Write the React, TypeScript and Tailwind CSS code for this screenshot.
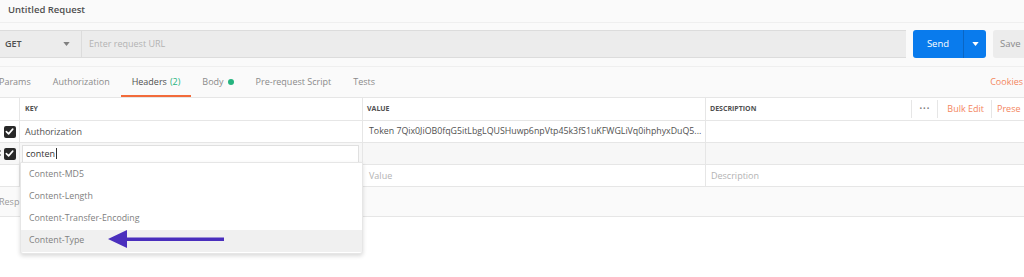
import React from "react";

const Check = () => (
  <span className="flex h-[12px] w-[12px] items-center justify-center rounded-[2px] bg-[#282828]">
    <svg width="9" height="9" viewBox="0 0 10 10">
      <path d="M1.5 5.2 L4 7.6 L8.6 2.4" stroke="#fff" strokeWidth="1.8" fill="none" strokeLinecap="round" strokeLinejoin="round" />
    </svg>
  </span>
);

const Caret = ({ color }: { color: string }) => (
  <svg width="7" height="4" viewBox="0 0 8 5">
    <path d="M0 0 L8 0 L4 5 Z" fill={color} />
  </svg>
);

const tabs = ["Params", "Authorization", "Headers", "Body", "Pre-request Script", "Tests"];

export default function App() {
  return (
    <div className="relative h-[277px] w-[1024px] overflow-hidden bg-white font-['Open_Sans',sans-serif] text-[#505050]">
      {/* title */}
      <div className="flex h-[23px] items-center border-b border-[#efefef] bg-[#fafafa] pb-[1px] pl-[8px] text-[9.5px] font-semibold">
        Untitled Request
      </div>

      {/* url bar */}
      <div className="flex h-[44px] items-center border-b border-[#efefef] bg-[#fafafa] pb-[1px]">
        <div className="flex h-[28px] w-[906px] border-y border-[#dcdcdc] bg-[#ececec]">
          <div className="flex w-[82px] items-center justify-between border-r border-[#dcdcdc] pl-[5px] pr-[11px] text-[9px] font-semibold">
            GET
            <Caret color="#808080" />
          </div>
          <div className="flex flex-1 items-center pl-[7px] text-[9px] text-[#b3b3b3]">Enter request URL</div>
        </div>
        <div className="ml-[7px] flex h-[28px] w-[73px] rounded-[3px] bg-[#097bed] text-white">
          <div className="flex w-[50px] items-center justify-center text-[9.5px]">Send</div>
          <div className="flex flex-1 items-center justify-center border-l border-[#0a66c4]">
            <Caret color="#ffffff" />
          </div>
        </div>
        <div className="ml-[7px] flex h-[28px] flex-1 items-center rounded-l-[3px] bg-[#ececec] pl-[7px] text-[9.5px] text-[#8a8a8a]">
          Save
        </div>
      </div>

      {/* tabs */}
      <div className="flex h-[30px] items-end bg-[#fafafa] text-[9px] text-[#8a8a8a]">
        <div className="flex h-full flex-1 items-stretch">
          {tabs.map((t, i) => (
            <div
              key={t}
              className={
                i === 0
                  ? "-ml-[1px] flex items-center pr-[11px]"
                  : i === 2
                  ? "flex items-center border-b-2 border-[#f26b3a] px-[11px] pt-[2px] text-[#505050]"
                  : "flex items-center px-[11px]"
              }
            >
              {t}
              {t === "Headers" && <span className="ml-[3px] text-[#26b47f]">(2)</span>}
              {t === "Body" && <span className="ml-[4px] inline-block h-[6px] w-[6px] rounded-full bg-[#26b47f]" />}
            </div>
          ))}
        </div>
        <div className="flex h-full items-center pr-[1px] text-[#f4865e]">Cookies</div>
      </div>

      {/* table */}
      <div className="border-t border-[#e6e6e6] text-[9px]">
        <div className="grid h-[23px] grid-cols-[20px_343px_343px_1fr] border-b border-[#e6e6e6] bg-white">
          <div className="border-r border-[#e6e6e6]" />
          <div className="flex items-center border-r border-[#e6e6e6] pl-[5px] text-[7px] font-bold text-[#505050]">KEY</div>
          <div className="flex items-center border-r border-[#e6e6e6] pl-[4px] text-[7px] font-bold text-[#505050]">VALUE</div>
          <div className="flex items-center justify-between pl-[4px]">
            <span className="text-[7px] font-bold text-[#505050]">DESCRIPTION</span>
            <div className="flex h-full items-center py-[2px] text-[9px]">
              <span className="flex h-full items-center border-l border-[#e6e6e6] px-[7px] text-[7px] tracking-[1px] text-[#808080]">•••</span>
              <span className="flex h-full items-center border-l border-[#e6e6e6] pl-[9px] pr-[7px] text-[#f4865e]">Bulk Edit</span>
              <span className="flex h-full w-[33px] items-center overflow-hidden whitespace-nowrap border-l border-[#e6e6e6] pl-[5px] text-[#f4865e]">Prese</span>
            </div>
          </div>
        </div>

        <div className="grid h-[22px] grid-cols-[20px_343px_343px_1fr] border-b border-[#e6e6e6] bg-white">
          <div className="flex items-center justify-center border-r border-[#e6e6e6]"><Check /></div>
          <div className="flex items-center border-r border-[#e6e6e6] pl-[5px]">Authorization</div>
          <div className="flex items-center whitespace-nowrap border-r border-[#e6e6e6] pl-[6px] text-[8.8px]">
            Token 7Qix0JiOB0fqG5itLbgLQUSHuwp6npVtp45k3fS1uKFWGLiVq0ihphyxDuQ5...
          </div>
          <div />
        </div>

        <div className="grid h-[22px] grid-cols-[20px_343px_343px_1fr] border-b border-[#e6e6e6] bg-[#f7f7f7]">
          <div className="relative flex items-center justify-center border-r border-[#e6e6e6]">
            <span className="absolute left-[-1px] top-[7px] flex flex-col gap-[2px]">
              <span className="h-[2px] w-[2px] bg-[#9a9a9a]" />
              <span className="h-[2px] w-[2px] bg-[#9a9a9a]" />
            </span>
            <Check />
          </div>
          <div className="flex items-center border-r border-[#e6e6e6] pl-[2px] pr-[3px]">
            <div className="flex h-[18px] w-full items-center border border-[#e0e0e0] bg-white pl-[3px] text-[#333]">
              conten<span className="ml-[1px] inline-block h-[11px] w-[1px] bg-[#333]" />
            </div>
          </div>
          <div className="border-r border-[#e6e6e6]" />
          <div />
        </div>

        <div className="grid h-[22px] grid-cols-[20px_343px_343px_1fr] border-b border-[#e6e6e6] bg-white text-[#b3b3b3]">
          <div className="border-r border-[#e6e6e6]" />
          <div className="border-r border-[#e6e6e6]" />
          <div className="flex items-center border-r border-[#e6e6e6] pl-[6px]">Value</div>
          <div className="flex items-center pl-[5px]">Description</div>
        </div>
      </div>

      <div className="flex h-[30px] items-center border-b border-[#e6e6e6] bg-[#fafafa] text-[9px] text-[#9a9a9a]">
        <span className="-ml-[1px]">Resp</span>
      </div>

      {/* autocomplete */}
      <div className="absolute left-[20px] top-[162px] w-[343px] rounded-b-[3px] border border-[#e6e6e6] bg-white py-[1px] text-[8.8px] text-[#808080] shadow-[0_2px_4px_rgba(0,0,0,0.15)]">
        {["Content-MD5", "Content-Length", "Content-Transfer-Encoding", "Content-Type"].map((s, i) => (
          <div key={s} className={"flex h-[22px] items-center pl-[8px] " + (i === 3 ? "bg-[#f0f0f0]" : "")}>
            {s}
          </div>
        ))}
      </div>

      {/* annotation arrow */}
      <svg className="absolute left-[106px] top-[228px]" width="122" height="22" viewBox="0 0 122 22">
        <path d="M2 11 L21 2 L21 9.5 L118 9.5 L118 13 L21 13 L21 20 Z" fill="#4a2fbd" />
      </svg>
    </div>
  );
}
